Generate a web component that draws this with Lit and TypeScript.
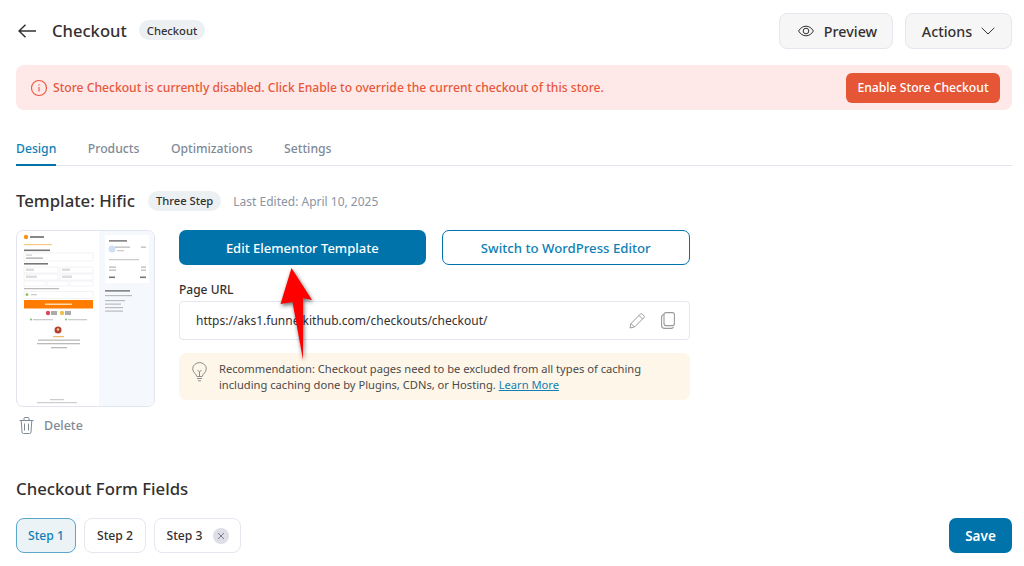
import { LitElement, html, css, svg } from "lit";
import { customElement } from "lit/decorators.js";

const thumb = svg`<svg class="thumb-svg" width="137" height="175" viewBox="0 0 137 175">
  <defs><filter id="b" x="-20%" y="-20%" width="140%" height="140%"><feGaussianBlur stdDeviation="0.7"/></filter></defs>
  <rect x="82" y="0" width="55" height="175" fill="#f5f8fd"/>
  <g filter="url(#b)">
    <circle cx="9" cy="6" r="2.200" fill="#f7941d"/>
    <rect x="13" y="5" width="14" height="2" fill="#888"/>
    <rect x="7" y="13" width="28" height="1.200" fill="#f9c98a"/>
    <rect x="7" y="18.500" width="26" height="1.600" fill="#777"/>
    <rect x="7" y="22" width="69" height="8" fill="#fff" stroke="#e6e8ee" stroke-width=".5"/>
    <rect x="9" y="23.500" width="6" height="1.200" fill="#ccc"/><rect x="9" y="26.500" width="17" height="1.300" fill="#aaa"/>
    <rect x="7" y="32" width="24" height="1.600" fill="#777"/>
    <rect x="7" y="36" width="34" height="6" fill="#fff" stroke="#e6e8ee" stroke-width=".5"/>
    <rect x="43" y="36" width="33" height="6" fill="#fff" stroke="#e6e8ee" stroke-width=".5"/>
    <rect x="7" y="43" width="34" height="6" fill="#fff" stroke="#e6e8ee" stroke-width=".5"/>
    <rect x="43" y="43" width="33" height="6" fill="#fff" stroke="#e6e8ee" stroke-width=".5"/>
    <rect x="9" y="37.500" width="8" height="2.500" fill="#ddd"/><rect x="45" y="37.500" width="8" height="2.500" fill="#ddd"/>
    <rect x="9" y="44.500" width="11" height="2.500" fill="#ddd"/><rect x="45" y="44.500" width="10" height="2.500" fill="#ddd"/>
    <rect x="7" y="50" width="21" height="5" fill="#fff" stroke="#e6e8ee" stroke-width=".5"/>
    <rect x="30" y="50" width="21" height="5" fill="#fff" stroke="#e6e8ee" stroke-width=".5"/>
    <rect x="53" y="50" width="23" height="5" fill="#fff" stroke="#e6e8ee" stroke-width=".5"/>
    <rect x="7" y="57" width="35" height="1.300" fill="#bbb"/>
    <rect x="7" y="60.500" width="69" height="7" fill="#fff" stroke="#e6e8ee" stroke-width=".5"/>
    <circle cx="10" cy="63.500" r="1.500" fill="#9bc76a"/>
    <rect x="14" y="63" width="6" height="1.300" fill="#ccc"/>
    <rect x="7" y="69" width="69" height="8.500" fill="#ff7c00"/>
    <rect x="28" y="72.500" width="27" height="1.500" fill="#ffd9ae"/>
    <circle cx="31" cy="82" r="2.200" fill="#d8485a"/><rect x="34" y="80" width="6" height="4" fill="#aaa"/>
    <circle cx="45" cy="82" r="2.200" fill="#e9c44a"/><rect x="48" y="80" width="6" height="4" fill="#aaa"/>
    <circle cx="14" cy="88.500" r="1.100" fill="#7cc57c"/><rect x="16" y="88" width="20" height="1.300" fill="#ccc"/>
    <circle cx="49" cy="88.500" r="1.100" fill="#7cc57c"/><rect x="51" y="88" width="19" height="1.300" fill="#ccc"/>
    <circle cx="41" cy="99" r="3.500" fill="#b2432f"/><circle cx="41" cy="98.500" r="1.200" fill="#f3c9b0"/>
    <rect x="36" y="105" width="11" height="1.200" fill="#f2b96b"/>
    <rect x="21" y="108.500" width="42" height="1.300" fill="#bbb"/>
    <rect x="20" y="112" width="43" height="1.300" fill="#bbb"/>
    <rect x="34" y="116" width="16" height="1.300" fill="#bbb"/>
    <rect x="33" y="168" width="14" height="1.200" fill="#ccc"/>
    <rect x="20" y="171" width="40" height="1.200" fill="#ccc"/>
    <rect x="88" y="4" width="44" height="48" fill="#fff"/>
    <rect x="92" y="9" width="18" height="1.700" fill="#888"/>
    <circle cx="95" cy="18" r="3.500" fill="#cfe0f5"/><rect x="98" y="15.500" width="15" height="1.300" fill="#bbb"/>
    <rect x="100" y="19" width="7" height="1.300" fill="#ccc"/><rect x="124" y="15.500" width="5" height="1.300" fill="#bbb"/>
    <rect x="92" y="28" width="30" height="1.300" fill="#ccc"/>
    <rect x="92" y="35.500" width="7" height="1.300" fill="#bbb"/><rect x="124" y="35.500" width="5" height="1.300" fill="#bbb"/>
    <rect x="92" y="38.500" width="7" height="1.300" fill="#bbb"/><rect x="124" y="38.500" width="5" height="1.300" fill="#bbb"/>
    <rect x="92" y="45.500" width="6" height="1.600" fill="#777"/><rect x="123" y="45.500" width="6" height="1.600" fill="#777"/>
    <rect x="88" y="59" width="25" height="1.700" fill="#888"/>
    <rect x="88" y="64" width="27" height="1.200" fill="#bbb"/>
    <rect x="88" y="69" width="20" height="1.200" fill="#bbb"/>
    <rect x="88" y="72.500" width="16" height="1.200" fill="#bbb"/>
    <rect x="88" y="76" width="18" height="1.200" fill="#bbb"/>
    <rect x="88" y="79.500" width="18" height="1.200" fill="#bbb"/>
  </g>
</svg>`;

@customElement("app-root")
export class AppRoot extends LitElement {
  static styles = css`
    :host {
      display: block;
      position: relative;
      width: 1024px;
      height: 566px;
      overflow: hidden;
      background: #fff;
      font-family: "Noto Sans", sans-serif;
      color: #353030;
      box-sizing: border-box;
      padding: 13px 12px 0 16px;
    }
    * { box-sizing: border-box; }
    .head { display: flex; align-items: center; height: 36px; }
    .back { margin: 0 16px 0 2px; display: block; }
    h1 { margin: 0; font-size: 16.600px; font-weight: 500; line-height: 24px; color: #353030; }
    .chip {
      display: inline-flex; align-items: center; height: 20px; padding: 0 8px;
      border-radius: 10px; background: #edf0f3; font-size: 11.200px; font-weight: 500; color: #353030;
    }
    .head .chip { margin: -2px 0 0 12px; }
    .head-actions { margin-left: auto; display: flex; gap: 12px; }
    .ghost {
      display: flex; align-items: center; justify-content: center; height: 36px;
      border: 1px solid #e6e6ef; border-radius: 8px; background: #f6f6f6;
      font-size: 14.300px; font-weight: 500; color: #353030;
    }
    .preview { width: 114px; gap: 10px; padding-left: 3px; }
    .actions { width: 107px; gap: 9px; }
    .alert {
      display: flex; align-items: center; height: 45px; margin-top: 16px; padding: 0 12px 0 14px;
      border-radius: 8px; background: #ffe8e8; color: #e6583a; font-size: 12.130px; font-weight: 500;
    }
    .alert svg { margin-right: 5px; flex: none; }
    .enable {
      margin-left: auto; width: 154px; height: 30px; display: flex; align-items: center; justify-content: center;
      border-radius: 6px; background: #e45635; color: #fff; font-size: 12.200px; font-weight: 500;
    }
    .tabs {
      display: flex; gap: 31.500px; margin-top: 23px; height: 33px; border-bottom: 1px solid #e2e4f0;
      font-size: 12.200px; font-weight: 500; color: #7f8a97;
    }
    .tab { height: 33px; padding-top: 7px; line-height: 18px; }
    .tab.on { color: #0f7fb5; border-bottom: 2px solid #0073aa; }
    .tpl { display: flex; align-items: center; height: 24px; margin-top: 23px; }
    h2 { margin: 0; font-size: 16.750px; font-weight: 500; line-height: 24px; color: #353030; }
    .tpl .chip { margin: -1px 0 0 13px; }
    .edited { margin-left: 12px; font-size: 12px; color: #8a94a3; }
    .body { display: flex; margin-top: 17px; gap: 24px; }
    .left { width: 139px; }
    .thumb { width: 139px; height: 177px; border: 1px solid #e2e4f0; border-radius: 7px; overflow: hidden; background: #fff; }
    .thumb-svg { display: block; }
    .delete { display: flex; align-items: center; gap: 10px; margin-top: 8px; padding-left: 3px; height: 20px; font-size: 12.500px; font-weight: 500; color: #7f8a97; }
    .right { width: 511px; }
    .btns { display: flex; gap: 16px; }
    .btn {
      flex: 1; height: 35px; display: flex; align-items: center; justify-content: center;
      border-radius: 7px; font-size: 13px; font-weight: 500;
    }
    .primary { background: #0073aa; color: #fff; }
    .outline { border: 1px solid #0073aa; color: #0f7fb5; background: #fff; font-size: 13.200px; }
    .label { margin-top: 16px; font-size: 12px; font-weight: 500; line-height: 18px; color: #353030; }
    .url {
      display: flex; align-items: center; height: 39px; margin-top: 2px; padding: 0 14px 0 16px;
      border: 1px solid #e6e6ef; border-radius: 4px; font-size: 12px; color: #353030;
    }
    .url-icons { margin-left: auto; display: flex; align-items: center; gap: 16px; }
    .url-icons svg { display: block; }
    .rec {
      display: flex; gap: 12px; height: 47px; margin-top: 13px; padding: 8px 14px 0 13px;
      border-radius: 7px; background: #fef6e9; font-size: 11.150px; line-height: 16px; color: #4a4a4a;
    }
    .rec svg { flex: none; margin-top: 1px; }
    .rec a { color: #0f7fb5; text-decoration: underline; }
    .fields { margin-top: 42px; }
    .bottom { display: flex; align-items: center; margin-top: 17px; }
    .step {
      display: flex; align-items: center; justify-content: center; gap: 10px; height: 35px; margin-right: 8px;
      border: 1px solid #e6e6ef; border-radius: 8px; background: #fff;
      font-size: 12.200px; font-weight: 500; color: #353030;
    }
    .step.s1 { width: 60px; background: #ebf3f7; border-color: #5ba6cb; color: #0f7fb5; }
    .step.s2 { width: 62px; }
    .step.s3 { width: 87px; }
    .x { width: 16px; height: 16px; border-radius: 50%; background: #dedee8; display: flex; align-items: center; justify-content: center; }
    .save {
      margin-left: auto; width: 63px; height: 35px; display: flex; align-items: center; justify-content: center;
      border-radius: 7px; background: #0073aa; color: #fff; font-size: 13.500px; font-weight: 600;
    }
    .arrow { position: absolute; left: 270px; top: 260px; filter: drop-shadow(1px 2px 2px rgba(0,0,0,.6)); }
  `;

  render() {
    return html`
      <div class="head">
        <svg class="back" width="18" height="14" viewBox="0 0 18 14" fill="none" stroke="#353030" stroke-width="1.500">
          <path d="M18 7H1M7.500 .7 1 7l6.500 6.300"/>
        </svg>
        <h1>Checkout</h1>
        <span class="chip">Checkout</span>
        <div class="head-actions">
          <div class="ghost preview">
            <svg width="16" height="12" viewBox="0 0 16 12" fill="none" stroke="#353030" stroke-width="1">
              <path d="M.6 6C2.500 2.800 5 1.200 8 1.200S13.500 2.800 15.400 6C13.500 9.200 11 10.800 8 10.800S2.500 9.200.6 6Z"/>
              <circle cx="8" cy="6" r="2.800"/>
            </svg>
            Preview
          </div>
          <div class="ghost actions">
            Actions
            <svg width="14" height="8" viewBox="0 0 14 8" fill="none" stroke="#353030" stroke-width="1"><path d="M.7.8 7 7 13.300.8"/></svg>
          </div>
        </div>
      </div>

      <div class="alert">
        <svg width="18" height="18" viewBox="0 0 18 18" fill="none" stroke="#e6583a" stroke-width="1.100">
          <circle cx="9" cy="9" r="7.500"/><path d="M9 8v4.500M9 5.200v1.200"/>
        </svg>
        Store Checkout is currently disabled. Click Enable to override the current checkout of this store.
        <div class="enable">Enable Store Checkout</div>
      </div>

      <div class="tabs">
        <div class="tab on">Design</div>
        <div class="tab">Products</div>
        <div class="tab">Optimizations</div>
        <div class="tab">Settings</div>
      </div>

      <div class="tpl">
        <h2>Template: Hific</h2>
        <span class="chip">Three Step</span>
        <span class="edited">Last Edited: April 10, 2025</span>
      </div>

      <div class="body">
        <div class="left">
          <div class="thumb">${thumb}</div>
          <div class="delete">
            <svg width="15" height="17" viewBox="0 0 15 17" fill="none" stroke="#7f8a97" stroke-width="1">
              <path d="M.5 3.500h14M5 3.500V1.500q0-1 1-1h3q1 0 1 1v2M2.200 3.500l.8 11.500q.1 1.500 1.500 1.500h6q1.400 0 1.500-1.500l.8-11.500M5.500 6.500v7M9.500 6.500v7"/>
            </svg>
            Delete
          </div>
        </div>
        <div class="right">
          <div class="btns">
            <div class="btn primary">Edit Elementor Template</div>
            <div class="btn outline">Switch to WordPress Editor</div>
          </div>
          <div class="label">Page URL</div>
          <div class="url">
            https://aks1.funnelkithub.com/checkouts/checkout/
            <div class="url-icons">
              <svg width="16" height="16" viewBox="0 0 16 16" fill="none" stroke="#9a9a9a" stroke-width="1"><path d="M1 15l1-4.500L11.500 1q.8-.7 1.600 0l1.900 1.900q.7.8 0 1.600L5.500 14ZM2 10.500 5.500 14M10 2.500l3.500 3.500"/></svg>
              <svg width="14" height="17" viewBox="0 0 14 17" fill="none" stroke="#9a9a9a" stroke-width="1.100"><rect x="3" y=".6" width="10.400" height="13" rx="2"/><path d="M3 2.500Q.6 2.800.6 5v8.500q0 2.900 3 2.900h6.500q2 0 2.300-1.500"/></svg>
            </div>
          </div>
          <div class="rec">
            <svg width="15" height="20" viewBox="0 0 15 20" fill="none" stroke="#8c8c8c" stroke-width="1">
              <path d="M4.800 14.500C4.500 12 .7 10.500.7 6.800a6.800 6.200 0 0 1 13.600 0c0 3.700-3.800 5.200-4.100 7.700ZM5 16.500h5M6 18.800h3M5.500 8l2 2 2-2M7.500 10v4.500"/>
            </svg>
            <div>Recommendation: Checkout pages need to be excluded from all types of caching including caching done by Plugins, CDNs, or Hosting. <a>Learn More</a></div>
          </div>
        </div>
      </div>

      <h2 class="fields">Checkout Form Fields</h2>
      <div class="bottom">
        <div class="step s1">Step 1</div>
        <div class="step s2">Step 2</div>
        <div class="step s3">Step 3
          <span class="x"><svg width="8" height="8" viewBox="0 0 8 8" stroke="#7c7c8a" stroke-width="1"><path d="M1 1l6 6M7 1 1 7"/></svg></span>
        </div>
        <div class="save">Save</div>
      </div>

      <svg class="arrow" width="50" height="105" viewBox="270 260 50 105">
        <path d="M291.500 268 312 300 303 298 303 360 292.500 302 280.500 304Z" fill="#f00"/>
      </svg>
    `;
  }
}
